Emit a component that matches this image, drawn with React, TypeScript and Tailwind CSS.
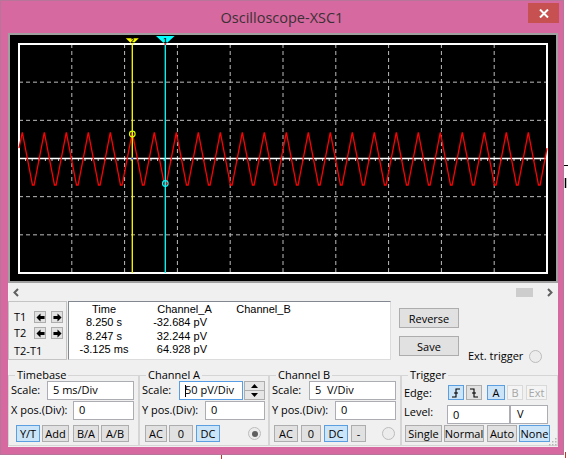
import type { ReactNode } from 'react'
import clsx from 'clsx'

// screen geometry (inside the black area, 546x246)
const GX = 9
const GY = 9
const GW = 528
const GH = 229
const DX = GW / 10
const DY = GH / 6
const CY = GY + GH / 2

function wavePoints() {
  const top = 97.3
  const bot = 150
  const slope = (bot - top) / 11
  const pts: string[] = [`${GX},${(top + 3.3 * slope).toFixed(1)}`]
  for (let k = 0; k < 24; k++) {
    const p = 12.3 + 22 * k
    const t = p + 11
    pts.push(`${p.toFixed(1)},${top}`)
    if (t <= GX + GW) pts.push(`${(t - 0.8).toFixed(1)},${bot}`, `${(t + 0.8).toFixed(1)},${bot}`)
  }
  pts.push(`${GX + GW},${(bot - (GX + GW - 529.3) * slope).toFixed(1)}`)
  return pts.join(' ')
}

function Screen() {
  const ticks = Array.from({ length: 81 }, (_, i) => GX + i * (GW / 80))
  return (
    <svg width="546" height="246" className="block">
      <rect width="546" height="246" fill="#000" />
      {/* dashed graticule */}
      {Array.from({ length: 9 }, (_, i) => (
        <line key={`v${i}`} x1={GX + DX * (i + 1)} x2={GX + DX * (i + 1)} y1={GY} y2={GY + GH} stroke="#bdbdbd" strokeDasharray="4 3" />
      ))}
      {[1, 2, 4, 5].map((j) => (
        <line key={`h${j}`} x1={GX} x2={GX + GW} y1={GY + DY * j} y2={GY + DY * j} stroke="#bdbdbd" strokeDasharray="4 3" />
      ))}
      {/* centre line with minor ticks */}
      <line x1={GX} x2={GX + GW} y1={CY} y2={CY} stroke="#fff" strokeWidth="1.5" />
      {ticks.map((x) => (
        <line key={x} x1={x} x2={x} y1={CY} y2={CY + 2.5} stroke="#fff" strokeWidth="0.8" />
      ))}
      <rect x={GX} y={GY} width={GW} height={GH} fill="none" stroke="#fff" strokeWidth="2" />
      {/* channel A trace */}
      <polyline points={wavePoints()} fill="none" stroke="#ff0000" strokeWidth="1.3" />
      {/* cursors */}
      <line x1="122.3" x2="122.3" y1={GY} y2={GY + GH} stroke="#ffff00" strokeWidth="1.3" />
      <line x1="155.3" x2="155.3" y1={GY} y2={GY + GH} stroke="#00ffff" strokeWidth="1.3" />
      <polygon points="115.8,3.3 128.8,3.3 122.3,9.5" fill="#ffff00" />
      <text x="122.3" y="8.3" fontSize="6.5" fontWeight="bold" textAnchor="middle" fill="#000" fontFamily="Liberation Sans, sans-serif">2</text>
      <polygon points="146,1 164.6,1 155.3,9.5" fill="#00ffff" />
      <text x="155.3" y="7.6" fontSize="7.5" fontWeight="bold" textAnchor="middle" fill="#000" fontFamily="Liberation Sans, sans-serif">1</text>
      <circle cx="155.3" cy={GY} r="1" fill="#ff2020" />
      <circle cx="122.3" cy={CY} r="1" fill="#3050ff" />
      <circle cx="122.3" cy="99" r="2.8" fill="none" stroke="#d8ff00" strokeWidth="1.2" />
      <circle cx="155.3" cy="148.5" r="2.8" fill="none" stroke="#00ffff" strokeWidth="1.2" />
    </svg>
  )
}

function Btn({ active, disabled, className, children }: { active?: boolean; disabled?: boolean; className?: string; children: ReactNode }) {
  return (
    <div
      className={clsx(
        'flex shrink-0 items-center justify-center border leading-none',
        active
          ? 'border-[#5b9fe0] bg-[#cce4f7]'
          : disabled
            ? 'border-[#d9d9d9] bg-[#f4f4f4] text-[#a6a6a6]'
            : 'border-[#adadad] bg-[#e1e1e1]',
        className,
      )}
    >
      {children}
    </div>
  )
}

function Field({ className, focused, children }: { className?: string; focused?: boolean; children?: ReactNode }) {
  return (
    <div
      className={clsx(
        'flex h-[19px] shrink-0 items-center border bg-white pl-[5px]',
        focused ? 'border-[#569de5]' : 'border-[#abadb3]',
        className,
      )}
    >
      {children}
    </div>
  )
}

function Radio({ dot, className }: { dot?: boolean; className?: string }) {
  return (
    <div className={clsx('flex h-[13px] w-[13px] shrink-0 items-center justify-center rounded-full border border-[#bcbcbc] bg-[#ececec]', className)}>
      {dot && <div className="h-[6px] w-[6px] rounded-full bg-[#5f5f5f]" />}
    </div>
  )
}

function Arrow({ dir }: { dir: 'l' | 'r' }) {
  return (
    <svg width="9" height="9" viewBox="0 0 10 10" className={dir === 'r' ? '-scale-x-100' : ''}>
      <path d="M0.5 5 L5 0.5 L5 3.3 L9.5 3.3 L9.5 6.7 L5 6.7 L5 9.5 Z" fill="#000" />
    </svg>
  )
}

function Chevron({ dir, className }: { dir: 'l' | 'r'; className?: string }) {
  return (
    <svg width="6" height="9" viewBox="0 0 6 9" className={className}>
      <polyline points={dir === 'l' ? '5,1 1.5,4.5 5,8' : '1,1 4.5,4.5 1,8'} fill="none" stroke="#606060" strokeWidth="2" />
    </svg>
  )
}

function Edge({ rising }: { rising?: boolean }) {
  return (
    <svg width="10" height="10" viewBox="0 0 10 10">
      <path d={rising ? 'M1 9 H5 V1 H9 M3 5 H7' : 'M1 1 H5 V9 H9 M3 5 H7'} fill="none" stroke="#000" strokeWidth="1.1" />
    </svg>
  )
}

function Legend({ children }: { children: ReactNode }) {
  return <legend className="ml-[4px] px-[2px] leading-[12px]">{children}</legend>
}

export default function App() {
  return (
    <div className="relative h-[459px] w-[568px] overflow-hidden bg-white font-['Open_Sans',sans-serif] text-[11px] text-black">
      {/* bits of the schematic behind the window */}
      <svg width="568" height="459" className="absolute inset-0">
        <line x1="221.5" x2="221.5" y1="455" y2="459" stroke="#c0392b" />
        <line x1="563" x2="568" y1="165.5" y2="165.5" stroke="#000" />
        <line x1="565.5" x2="565.5" y1="178" y2="188" stroke="#000" strokeWidth="1.5" />
        <line x1="565.5" x2="565.5" y1="452" y2="458" stroke="#c0392b" />
      </svg>

      <div className="relative flex h-[455px] w-[564px] flex-col border border-[#b8759a] bg-[#d6699f]">
        {/* title bar */}
        <div className="grid h-[32px] grid-cols-[1fr_auto_1fr]">
          <div />
          <div className="self-center pt-[2px] text-[14.5px] text-[#3a3035]">Oscilloscope-XSC1</div>
          <div className="flex justify-end pr-[4px] pt-[2px]">
            <div className="flex h-[20px] w-[31px] items-center justify-center bg-[#c75050]">
              <svg width="10" height="9" viewBox="0 0 10 9">
                <path d="M1 0.5 L9 8.5 M9 0.5 L1 8.5" stroke="#fff" strokeWidth="2" />
              </svg>
            </div>
          </div>
        </div>

        {/* client area */}
        <div className="relative ml-[7px] flex h-[414px] w-[550px] flex-col bg-[#f0f0f0]">
          <div className="h-[250px] border-2 border-[#a0a0a0] bg-black">
            <Screen />
          </div>

          {/* horizontal scroll bar */}
          <div className="flex h-[18px] items-center pl-[5px] pr-[5px]">
            <Chevron dir="l" />
            <div className="flex-1" />
            <div className="h-[9px] w-[17px] bg-[#cdcdcd]" />
            <Chevron dir="r" className="ml-[14px]" />
          </div>

          {/* cursor readout */}
          <div className="flex h-[59px]">
            <div className="flex w-[59px] flex-col border border-[#c4c4c4] pl-[5px] pt-[9px]">
              {['T1', 'T2'].map((t, i) => (
                <div key={t} className={clsx('flex h-[12px] items-center', i === 1 && 'mt-[4px]')}>
                  <span className="w-[20px]">{t}</span>
                  <div className="flex h-[12px] w-[12px] items-center justify-center border border-[#adadad] bg-[#e1e1e1]">
                    <Arrow dir="l" />
                  </div>
                  <div className="ml-[5px] flex h-[12px] w-[12px] items-center justify-center border border-[#adadad] bg-[#e1e1e1]">
                    <Arrow dir="r" />
                  </div>
                </div>
              ))}
              <div className="mt-[4px] leading-[15px]">T2-T1</div>
            </div>

            <div className="ml-[1px] flex w-[323px] border border-[#dcdcdc] border-l-[#828790] border-t-[#828790] bg-white pt-[1px] font-['Liberation_Sans',sans-serif] leading-[13.3px]">
              <div className="w-[70px] text-center">
                <div>Time</div>
                <div>8.250 s</div>
                <div>8.247 s</div>
                <div>-3.125 ms</div>
              </div>
              <div className="ml-[11px] w-[69px]">
                <div className="text-center">Channel_A</div>
                <div className="pr-[12px] text-right">-32.684 pV</div>
                <div className="pr-[12px] text-right">32.244 pV</div>
                <div className="pr-[12px] text-right">64.928 pV</div>
              </div>
              <div className="ml-[10px] w-[69px] text-center">Channel_B</div>
            </div>

            <div className="ml-[8px] flex flex-col pt-[7px]">
              <Btn className="h-[20px] w-[60px]">Reverse</Btn>
              <Btn className="mt-[8px] h-[20px] w-[60px]">Save</Btn>
            </div>

            <div className="ml-[9px] mt-[48px] flex h-[15px] items-center self-start">
              <span>Ext. trigger</span>
              <Radio className="ml-[6px]" />
            </div>
          </div>

          {/* control groups */}
          <div className="flex pt-[9px]">
            <fieldset className="w-[131px] border border-[#d5d5d5] pb-[3px] pl-[2px]">
              <Legend>Timebase</Legend>
              <div className="flex h-[19px] items-center">
                <span className="w-[36px]">Scale:</span>
                <Field className="w-[87px]">5 ms/Div</Field>
              </div>
              <div className="mt-[1px] flex h-[19px] items-center">
                <span className="w-[62px]">X pos.(Div):</span>
                <Field className="w-[61px]">0</Field>
              </div>
              <div className="mt-[5px] flex h-[17px] pl-[5px]">
                <Btn active className="w-[24px]">Y/T</Btn>
                <Btn className="ml-[2px] w-[27px]">Add</Btn>
                <Btn className="ml-[4px] w-[26px]">B/A</Btn>
                <Btn className="ml-[2px] w-[28px]">A/B</Btn>
              </div>
            </fieldset>

            <fieldset className="w-[130px] border border-[#d5d5d5] pb-[3px] pl-[2px]">
              <Legend>Channel A</Legend>
              <div className="flex h-[19px] items-center">
                <span className="w-[37px]">Scale:</span>
                <Field focused className="w-[64px]">
                  <span className="-mr-px inline-block h-[12px] w-px bg-black" />
                  50 pV/Div
                </Field>
                <div className="ml-[1px] flex h-[19px] w-[21px] flex-col">
                  <div className="flex flex-1 items-center justify-center border border-[#adadad] bg-[#e6e6e6]">
                    <svg width="7" height="4"><path d="M0 4 L3.5 0 L7 4 Z" fill="#000" /></svg>
                  </div>
                  <div className="flex flex-1 items-center justify-center border border-t-0 border-[#adadad] bg-[#e6e6e6]">
                    <svg width="7" height="4"><path d="M0 0 L3.5 4 L7 0 Z" fill="#000" /></svg>
                  </div>
                </div>
              </div>
              <div className="mt-[1px] flex h-[19px] items-center">
                <span className="w-[63px]">Y pos.(Div):</span>
                <Field className="w-[60px]">0</Field>
              </div>
              <div className="mt-[5px] flex h-[17px] items-center pl-[3px]">
                <Btn className="h-[17px] w-[22px]">AC</Btn>
                <Btn className="ml-[2px] h-[17px] w-[24px]">0</Btn>
                <Btn active className="ml-[3px] h-[17px] w-[24px]">DC</Btn>
                <Radio dot className="ml-[28px]" />
              </div>
            </fieldset>

            <fieldset className="w-[132px] border border-[#d5d5d5] pb-[3px] pl-[2px]">
              <Legend>Channel B</Legend>
              <div className="flex h-[19px] items-center">
                <span className="w-[37px]">Scale:</span>
                <Field className="w-[87px]">5&nbsp; V/Div</Field>
              </div>
              <div className="mt-[1px] flex h-[19px] items-center">
                <span className="w-[63px]">Y pos.(Div):</span>
                <Field className="w-[61px]">0</Field>
              </div>
              <div className="mt-[5px] flex h-[17px] items-center pl-[2px]">
                <Btn className="h-[17px] w-[24px]">AC</Btn>
                <Btn className="ml-[3px] h-[17px] w-[20px]">0</Btn>
                <Btn active className="ml-[3px] h-[17px] w-[24px]">DC</Btn>
                <Btn className="ml-[3px] h-[17px] w-[15px]">-</Btn>
                <Radio className="ml-[16px]" />
              </div>
            </fieldset>

            <fieldset className="w-[157px] border border-[#d5d5d5] pb-[3px] pl-[2px]">
              <Legend>Trigger</Legend>
              <div className="flex h-[19px] items-end">
                <span className="w-[44px] leading-[15px]">Edge:</span>
                <Btn active className="h-[15px] w-[16px]"><Edge rising /></Btn>
                <Btn className="ml-[2px] h-[15px] w-[16px]"><Edge /></Btn>
                <Btn active className="ml-[5px] h-[15px] w-[18px]">A</Btn>
                <Btn disabled className="ml-[2px] h-[15px] w-[16px]">B</Btn>
                <Btn disabled className="ml-[3px] h-[15px] w-[21px]">Ext</Btn>
              </div>
              <div className="mt-[5px] flex h-[18px]">
                <span className="w-[43px] leading-[14px]">Level:</span>
                <Field className="h-[18px] w-[63px] pt-[2px]">0</Field>
                <Field className="h-[18px] w-[38px] pl-[6px]">V</Field>
              </div>
              <div className="mt-[2px] flex h-[17px] pl-[1px]">
                <Btn className="w-[37px]">Single</Btn>
                <Btn className="ml-[2px] w-[40px]">Normal</Btn>
                <Btn className="ml-[3px] w-[30px]">Auto</Btn>
                <Btn active className="ml-[2px] w-[31px]">None</Btn>
              </div>
            </fieldset>
          </div>

          {/* size grip */}
          <svg width="9" height="9" className="absolute bottom-[1px] right-[1px]">
            {[[7, 1], [4, 4], [7, 4], [1, 7], [4, 7], [7, 7]].map(([x, y]) => (
              <rect key={`${x}-${y}`} x={x} y={y} width="1.5" height="1.5" fill="#b5b5b5" />
            ))}
          </svg>
        </div>
      </div>
    </div>
  )
}
